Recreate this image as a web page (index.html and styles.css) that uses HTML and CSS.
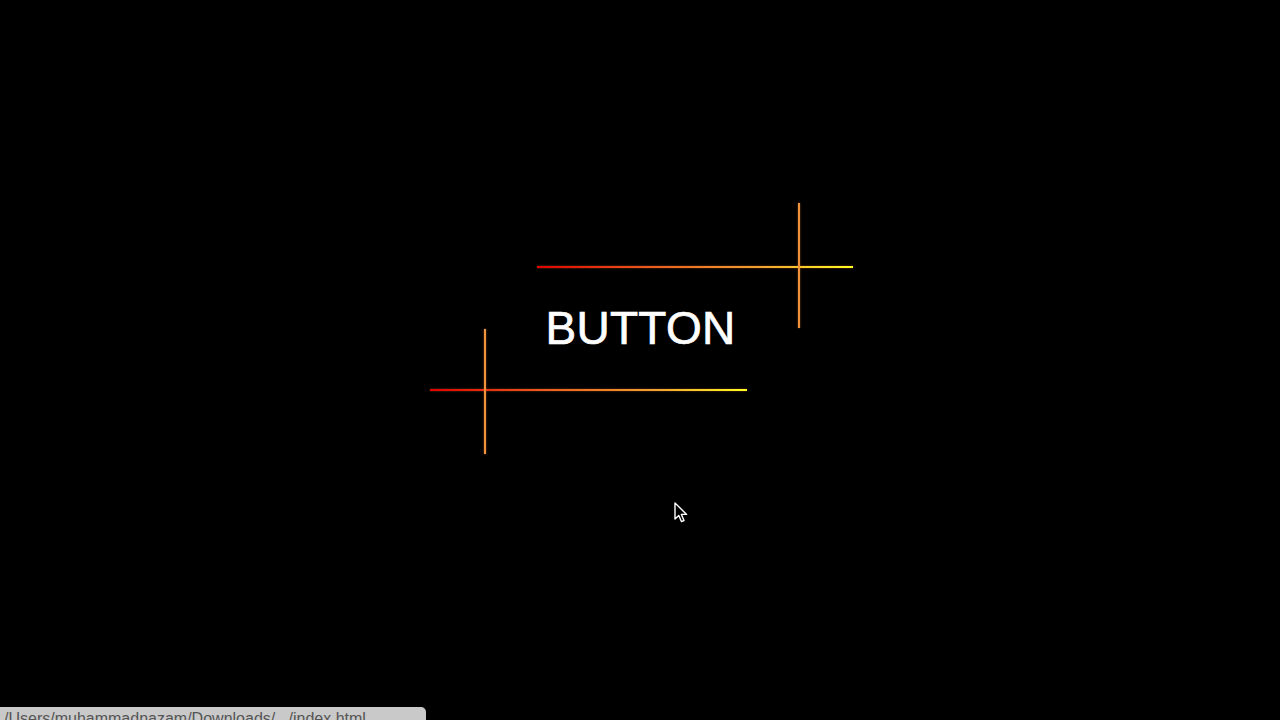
FILE: index.html
```html
<!DOCTYPE html>
<html>
<head>
<meta charset="utf-8">
<link rel="stylesheet" href="styles.css">
</head>
<body>
<main class="stage">
  <a class="btn" href="#">
    <span class="line line-top"></span>
    <span class="line line-bottom"></span>
    <span class="vline vline-right"></span>
    <span class="vline vline-left"></span>
    <span class="label">BUTTON</span>
  </a>
</main>
<svg class="cursor" width="14" height="22" viewBox="0 0 14 22">
  <path d="M1 1 L1 17 L4.8 13.4 L7.4 19.6 L10 18.5 L7.4 12.4 L12.6 12.4 Z" fill="#000" stroke="#fff" stroke-width="1.4" stroke-linejoin="round"/>
</svg>
<div class="status">/Users/muhammadnazam/Downloads/.../index.html</div>
</body>
</html>
```
FILE: styles.css
```css
html, body {
  margin: 0;
  padding: 0;
  height: 100%;
  background: #000;
  overflow: hidden;
}
body {
  font-family: "Liberation Sans", Arial, sans-serif;
}
.stage {
  height: 720px;
  display: flex;
  align-items: center;
  justify-content: center;
  padding-left: 3px;
  padding-bottom: 64px;
  box-sizing: border-box;
}
.btn {
  position: relative;
  width: 423px;
  height: 125px;
  display: flex;
  align-items: center;
  justify-content: center;
  text-decoration: none;
}
.label {
  color: #fff;
  font-size: 46px;
  font-weight: 400;
  line-height: 1;
  margin-left: -2px;
  margin-top: 0;
  letter-spacing: 0.3px;
  -webkit-text-stroke: 0.7px #fff;
}
.line {
  position: absolute;
  height: 2px;
  background: linear-gradient(to right, #e10000 0%, #ec5a1e 35%, #f0a030 70%, #ffff20 100%);
  box-shadow: 0 0 2px rgba(255, 120, 40, 0.5);
}
.line-top {
  top: 0;
  right: 0;
  width: 316px;
}
.line-bottom {
  bottom: 0;
  left: 0;
  width: 317px;
}
.vline {
  position: absolute;
  width: 2px;
  height: 125px;
  background: #f0923c;
  box-shadow: 0 0 2px rgba(240, 140, 60, 0.6);
}
.vline-right {
  top: -63px;
  right: 53px;
}
.vline-left {
  bottom: -63px;
  left: 54px;
}
.cursor {
  position: absolute;
  left: 674px;
  top: 502px;
}
.status {
  position: absolute;
  left: 0;
  top: 707px;
  width: 422px;
  height: 24px;
  padding-left: 4px;
  background: #c9c9c9;
  color: #555;
  font-size: 16px;
  line-height: 24px;
  border-top-right-radius: 5px;
  white-space: nowrap;
  overflow: hidden;
}
```
